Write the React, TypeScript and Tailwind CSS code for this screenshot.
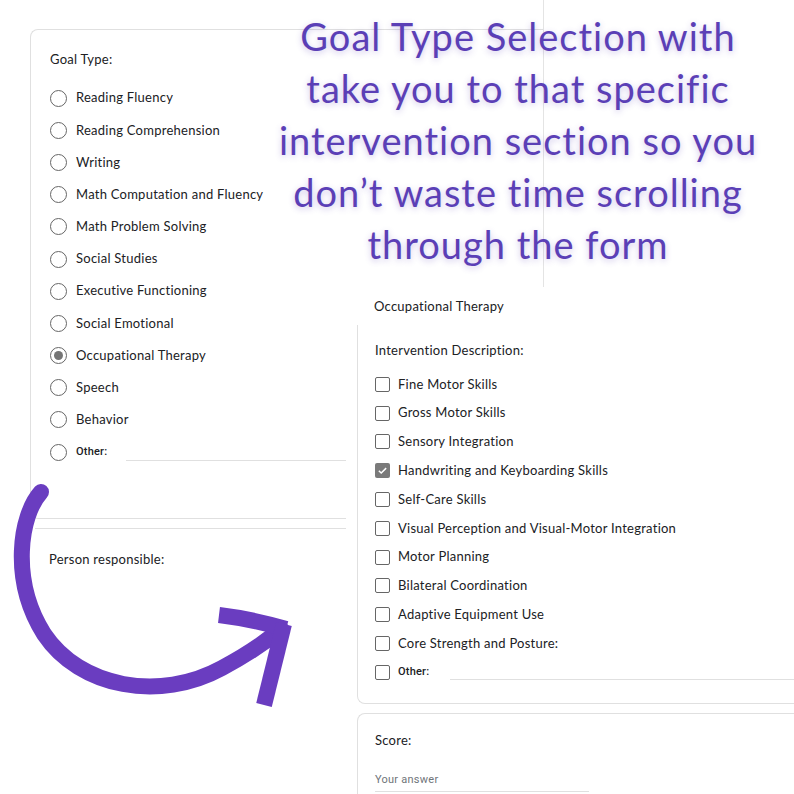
import React from "react";

const goalTypes = [
  "Reading Fluency",
  "Reading Comprehension",
  "Writing",
  "Math Computation and Fluency",
  "Math Problem Solving",
  "Social Studies",
  "Executive Functioning",
  "Social Emotional",
  "Occupational Therapy",
  "Speech",
  "Behavior",
];

const interventions = [
  "Fine Motor Skills",
  "Gross Motor Skills",
  "Sensory Integration",
  "Handwriting and Keyboarding Skills",
  "Self-Care Skills",
  "Visual Perception and Visual-Motor Integration",
  "Motor Planning",
  "Bilateral Coordination",
  "Adaptive Equipment Use",
  "Core Strength and Posture:",
];

function Radio({ checked }: { checked?: boolean }) {
  return (
    <span className="flex h-[17px] w-[17px] shrink-0 items-center justify-center rounded-full border-[1.5px] border-[#666]">
      {checked && <span className="h-[9px] w-[9px] rounded-full bg-[#757575]" />}
    </span>
  );
}

function Checkbox({ checked }: { checked?: boolean }) {
  if (checked) {
    return (
      <span className="flex h-[15px] w-[15px] shrink-0 items-center justify-center rounded-[2px] bg-[#7a7a7a]">
        <svg width="11" height="11" viewBox="0 0 12 12" fill="none">
          <path d="M2 6.2l2.6 2.6L10 3.4" stroke="#fff" strokeWidth="1.6" />
        </svg>
      </span>
    );
  }
  return <span className="h-[15px] w-[15px] shrink-0 rounded-[2px] border-[1.5px] border-[#666]" />;
}

function OtherLabel() {
  return (
    <span className="font-['Roboto',sans-serif] text-[11px] font-medium tracking-[0.2px] text-[#202124]">Other:</span>
  );
}

export default function App() {
  return (
    <div className="relative h-[794px] w-[794px] overflow-hidden bg-white font-['Lato',sans-serif] text-[13px] tracking-[0.25px] text-[#202124]">
      {/* left form screenshot */}
      <div className="absolute left-0 top-0 h-full w-[544px] border-r border-[#e4e4e4]">
        <div className="ml-[30px] mt-[29px] rounded-tl-[8px] rounded-bl-[8px] border-b border-l border-t border-[#e0e0e0] pb-[50px] pl-[19px] pt-[19px]">
          <div className="h-[20px] leading-[20px]">Goal Type:</div>
          <div className="mt-[13px]">
            {goalTypes.map((g) => (
              <div key={g} className="flex h-[32.2px] items-center gap-[9px]">
                <Radio checked={g === "Occupational Therapy"} />
                <span>{g}</span>
              </div>
            ))}
            <div className="flex h-[32.2px] items-center gap-[9px]">
              <Radio />
              <OtherLabel />
              <span className="ml-[10px] mt-[16px] h-px flex-1 bg-[#e0e0e0]" />
            </div>
          </div>
        </div>
        <div className="ml-[35px] mt-[9px] h-[300px] border-t border-[#e0e0e0] pl-[14px] pt-[20px]">
          <div className="leading-[20px]">Person responsible:</div>
        </div>
      </div>

      {/* right form screenshot */}
      <div className="absolute bottom-0 left-[346px] right-0 top-[287px] bg-white pl-[11px]">
        <div className="pl-[17px] pt-[9px] leading-[20px]">Occupational Therapy</div>
        <div className="mt-[9px] rounded-bl-[8px] border-b border-l border-[#e0e0e0] pb-[16px] pl-[17px] pt-[15px]">
          <div className="h-[20px] leading-[20px]">Intervention Description:</div>
          <div className="mt-[10px]">
            {interventions.map((t) => (
              <div key={t} className="flex h-[28.8px] items-center gap-[8px]">
                <Checkbox checked={t === "Handwriting and Keyboarding Skills"} />
                <span>{t}</span>
              </div>
            ))}
            <div className="flex h-[28.8px] items-center gap-[8px]">
              <Checkbox />
              <OtherLabel />
              <span className="ml-[13px] mt-[14px] h-px flex-1 bg-[#e0e0e0]" />
            </div>
          </div>
        </div>
        <div className="mt-[9px] h-[120px] rounded-tl-[8px] border-l border-t border-[#e0e0e0] pl-[17px] pt-[16px]">
          <div className="leading-[20px]">Score:</div>
          <div className="mt-[22px] w-[214px] border-b border-[#e0e0e0] pb-[3px] font-['Roboto',sans-serif] text-[11px] leading-[16px] text-[#70757a]">
            Your answer
          </div>
        </div>
      </div>

      {/* headline overlay */}
      <div className="absolute left-[248px] top-[10px] w-[540px] text-center font-['Lato',sans-serif] text-[38px] font-normal leading-[52px] tracking-[1px] text-[#5b3fb6] [text-shadow:0_2px_6px_rgba(91,63,182,0.3)]">
        Goal Type Selection with
        <br />
        take you to that specific
        <br />
        intervention section so you
        <br />
        don’t waste time scrolling
        <br />
        through the form
      </div>

      {/* hand-drawn arrow */}
      <svg className="pointer-events-none absolute left-0 top-0" width="794" height="794" viewBox="0 0 794 794" fill="none">
        <path
          d="M41 492 C 20 515, 10 580, 44 634 C 80 688, 160 702, 222 668 Q 256 650 281 629"
          stroke="#6a3dc0"
          strokeWidth="16"
          strokeLinecap="round"
        />
        <path d="M219 615 Q 252 619 286 629" stroke="#6a3dc0" strokeWidth="16" />
        <path d="M284 624 L 264 705" stroke="#6a3dc0" strokeWidth="16" />
      </svg>
    </div>
  );
}
